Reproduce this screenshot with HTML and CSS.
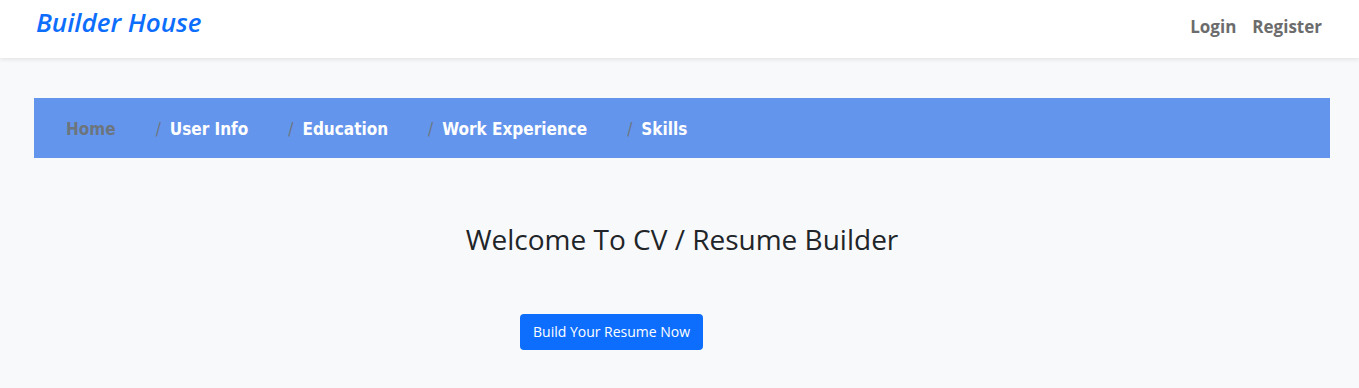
FILE: index.html
```html
<!DOCTYPE html>
<html lang="en">
<head>
  <meta charset="UTF-8" />
  <meta name="viewport" content="width=device-width, initial-scale=1.0" />
  <title>Builder House</title>
  <link rel="stylesheet" href="styles.css">
</head>
<body>
  <nav class="navbar">
    <a class="brand" href="#">Builder House</a>
    <div class="nav-links">
      <a href="#">Login</a>
      <a href="#">Register</a>
    </div>
  </nav>

  <main class="page">
    <ol class="crumbs">
      <li class="active">Home</li>
      <li><a href="#">User Info</a></li>
      <li><a href="#">Education</a></li>
      <li><a href="#">Work Experience</a></li>
      <li><a href="#">Skills</a></li>
    </ol>

    <h3 class="welcome">Welcome To CV / Resume Builder</h3>

    <div class="actions">
      <a class="btn" href="#">Build Your Resume Now</a>
    </div>
  </main>
</body>
</html>
```

FILE: styles.css
```css
body {
  margin: 0;
  font-family: "Open Sans", "Noto Sans", sans-serif;
  font-size: 14.4px;
  line-height: 1.6;
  color: #212529;
  background: #f8f9fa;
  height: 388px;
  overflow: hidden;
}

a {
  text-decoration: none;
}

.navbar {
  height: 58px;
  background: #fff;
  box-shadow: 0 2px 4px rgba(0,0,0,0.08);
  display: flex;
  justify-content: space-between;
  align-items: flex-start;
  padding: 0 37px 0 36px;
}

.brand {
  font-size: 26px;
  font-style: italic;
  font-weight: 600;
  color: #0d6efd;
  line-height: 44px;
}

.nav-links {
  display: flex;
  gap: 16px;
  padding-top: 14px;
}

.nav-links a {
  font-size: 17px;
  font-weight: 700;
  color: #6c6c6c;
  line-height: 26px;
}

.page {
  padding: 40px 29px 0 34px;
}

.crumbs {
  list-style: none;
  margin: 0;
  height: 60px;
  padding: 3px 0 0 32px;
  box-sizing: border-box;
  background: #6495ed;
  display: flex;
  align-items: center;
  font-family: "DejaVu Sans", sans-serif;
  font-stretch: condensed;
  font-size: 17px;
  font-weight: 700;
}

.crumbs li {
  color: #fff;
}

.crumbs li + li::before {
  content: "/";
  color: #6c757d;
  font-weight: 400;
  padding: 0 9px 0 40px;
}

.crumbs a {
  color: #fff;
}

.crumbs .active {
  color: #6c757d;
}

.welcome {
  margin: 65px 0 0;
  text-align: center;
  font-size: 28px;
  font-weight: 400;
  line-height: 1.2;
}

.actions {
  padding: 57px 0 0 486px;
}

.btn {
  display: inline-block;
  background: #0d6efd;
  color: #fff;
  border-radius: 4px;
  padding: 6px 13px;
  font-size: 14px;
  line-height: 24px;
}
```
